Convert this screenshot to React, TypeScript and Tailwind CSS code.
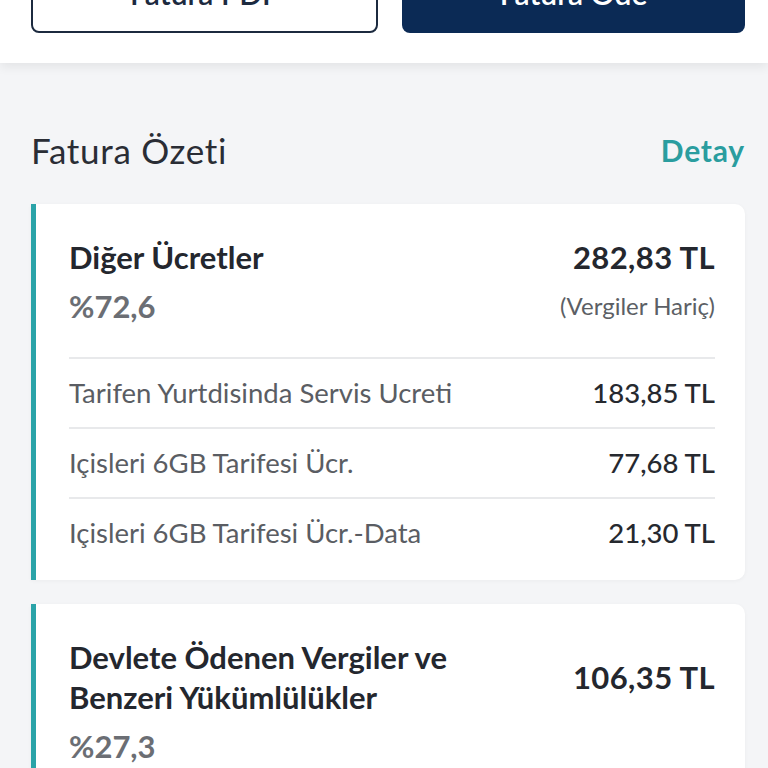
import React from "react";

type Line = { label: string; amount: string };

const lines: Line[] = [
  { label: "Tarifen Yurtdisinda Servis Ucreti", amount: "183,85 TL" },
  { label: "Içisleri 6GB Tarifesi Ücr.", amount: "77,68 TL" },
  { label: "Içisleri 6GB Tarifesi Ücr.-Data", amount: "21,30 TL" },
];

const SummaryCard = ({
  title,
  percent,
  amount,
  note,
  items,
}: {
  title: React.ReactNode;
  percent: string;
  amount: string;
  note?: string;
  items?: Line[];
}) => {
  return (
    <div className="bg-white rounded-r-[10px] border-l-[5px] border-[#2aa3a8] shadow-[0_1px_4px_rgba(0,0,0,0.04)] pl-[33px] pr-[30px] pt-[33px] pb-[13px]">
      <div className="flex justify-between items-center">
        <div className="text-[31px] leading-[40px] font-bold text-[#24272e]">
          {title}
        </div>
        <div className="text-[31px] leading-[40px] font-bold text-[#24272e] tracking-[0.4px] whitespace-nowrap">
          {amount}
        </div>
      </div>
      <div className="flex justify-between items-center mt-[9px] h-[40px]">
        <div className="text-[31px] font-bold text-[#6b6e74]">{percent}</div>
        {note && <div className="text-[24px] text-[#5c5f65]">{note}</div>}
      </div>
      {items && (
        <div className="mt-[31px]">
          {items.map((item, index) => (
            <div
              key={index}
              className="flex justify-between items-center h-[70px] border-t-2 border-[#e8e9eb]"
            >
              <span className="text-[27.5px] text-[#5a5d63]">{item.label}</span>
              <span className="text-[27.5px] font-medium text-[#26292f]">
                {item.amount}
              </span>
            </div>
          ))}
        </div>
      )}
    </div>
  );
};

export default function App() {
  return (
    <div className="h-[768px] overflow-hidden bg-[#f4f5f7] font-['Lato',sans-serif]">
      <div className="bg-white pb-[30px] shadow-[0_4px_10px_rgba(0,0,0,0.07)]">
        <div className="-mt-[47px] flex gap-6 pl-[31px] pr-[23px]">
          <button className="flex-1 h-[80px] rounded-[8px] border-2 border-[#1c2a3f] bg-white text-[#1c2a3f] text-[30px] font-semibold">
            Fatura PDF
          </button>
          <button className="flex-1 h-[80px] rounded-[8px] bg-[#0b2a55] text-white text-[30px] font-semibold">
            Fatura Öde
          </button>
        </div>
      </div>

      <div className="pl-[31px] pr-[23px] pt-[67px]">
        <div className="flex justify-between items-center h-[40px]">
          <h2 className="text-[35px] tracking-[0.7px] text-[#2a2d35]">
            Fatura Özeti
          </h2>
          <span className="text-[30px] tracking-[0.8px] font-bold text-[#2a9d9f]">
            Detay
          </span>
        </div>

        <div className="mt-[34px] flex flex-col gap-6">
          <SummaryCard
            title="Diğer Ücretler"
            percent="%72,6"
            amount="282,83 TL"
            note="(Vergiler Hariç)"
            items={lines}
          />
          <SummaryCard
            title={
              <>
                Devlete Ödenen Vergiler ve
                <br />
                Benzeri Yükümlülükler
              </>
            }
            percent="%27,3"
            amount="106,35 TL"
          />
        </div>
      </div>
    </div>
  );
}
